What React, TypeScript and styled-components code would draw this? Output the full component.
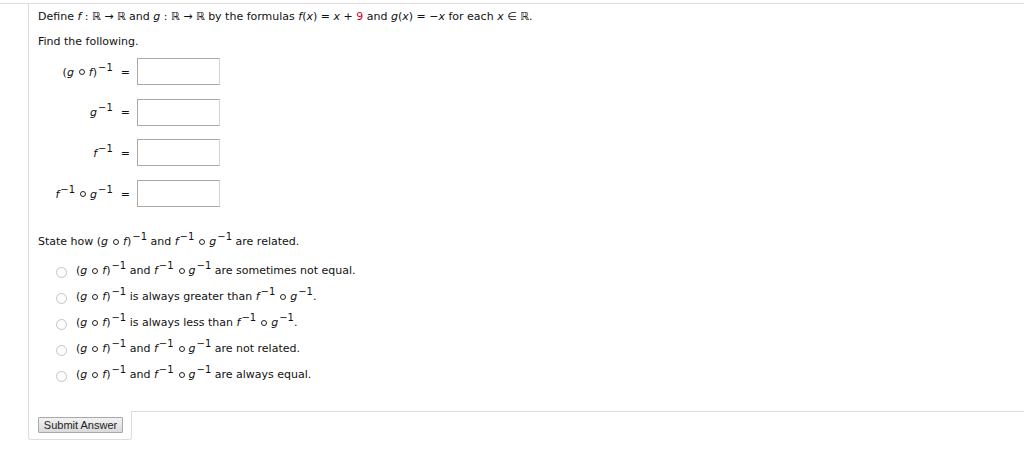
import React from "react";
import styled, { createGlobalStyle } from "styled-components";

const GlobalStyle = createGlobalStyle`
  html, body { margin: 0; padding: 0; background: #fff; }
  body {
    font-family: "DejaVu Sans", Verdana, sans-serif;
    font-size: 11px;
    color: #111;
    padding-top: 3px;
  }
`;

const Page = styled.div`
  border-top: 1px solid #dcdcdc;
`;

const Panel = styled.div`
  margin-left: 28px;
  border-left: 1px solid #dcdcdc;
  padding: 6px 0 29px 9px;
`;

const Para = styled.div<{ $mt?: number }>`
  line-height: 14px;
  margin-top: ${(p) => p.$mt ?? 0}px;
  white-space: nowrap;
`;

const V = styled.i`
  font-style: italic;
`;

const Red = styled.span`
  color: #d0021b;
`;

const Sup = styled.sup`
  font-size: 10px;
  line-height: 0;
  vertical-align: 5px;
  font-style: normal;
  margin-left: 1px;
`;

const Comp = styled.span`
  display: inline-block;
  box-sizing: border-box;
  width: 6px;
  height: 6px;
  border: 1.6px solid #222;
  border-radius: 50%;
  margin: 0 4px 1px 5px;
  vertical-align: middle;
`;

const Grid = styled.div`
  margin-top: 9px;
  display: grid;
  grid-template-columns: 92px 83px;
  column-gap: 7px;
  row-gap: 13.7px;
  align-items: center;
`;

const Label = styled.div`
  text-align: right;
  white-space: nowrap;
  line-height: 14px;
  padding-top: 2px;
`;

const Eq = styled.span`
  margin-left: 8px;
`;

const AnswerBox = styled.input`
  box-sizing: border-box;
  width: 83px;
  height: 27px;
  margin: 0;
  border: 1px solid #a9a9a9;
  border-right-color: #d4d4d4;
  background: #fff;
  padding: 0 4px;
  font: inherit;
`;

const Options = styled.div`
  margin-top: 15px;
  margin-left: 18px;
  display: flex;
  flex-direction: column;
  gap: 12px;
`;

const Option = styled.label`
  display: flex;
  align-items: center;
  gap: 9px;
  line-height: 14px;
  white-space: nowrap;
`;

const Radio = styled.span`
  box-sizing: border-box;
  width: 11px;
  height: 11px;
  border-radius: 50%;
  border: 1px solid #c4c4c4;
  background: #fdfdfd;
  flex: none;
  margin-top: 2px;
`;

const Footer = styled.div`
  display: flex;
  align-items: flex-start;
`;

const ButtonTab = styled.div`
  margin-left: 28px;
  width: 104px;
  border: 1px solid #dcdcdc;
  border-top: none;
  border-radius: 0 0 3px 3px;
  padding: 6px 0 6px 9px;
  box-sizing: border-box;
`;

const Filler = styled.div`
  flex: 1;
  border-top: 1px solid #dcdcdc;
`;

const SubmitButton = styled.button`
  display: block;
  box-sizing: border-box;
  width: 85px;
  height: 16px;
  padding: 0;
  margin: 0;
  border: 1px solid #a8a8a8;
  border-radius: 1px;
  background: linear-gradient(#f2f2f2, #dadada);
  font-family: "Liberation Sans", Arial, sans-serif;
  font-size: 11px;
  color: #222;
  line-height: 14px;
`;

const GoF = () => (
  <>
    (<V>g</V>
    <Comp />
    <V>f</V>)<Sup>−1</Sup>
  </>
);

const FinvGinv = () => (
  <>
    <V>f</V>
    <Sup>−1</Sup>
    <Comp />
    <V>g</V>
    <Sup>−1</Sup>
  </>
);

const options: React.ReactNode[] = [
  <>
    <GoF /> and <FinvGinv /> are sometimes not equal.
  </>,
  <>
    <GoF /> is always greater than <FinvGinv />.
  </>,
  <>
    <GoF /> is always less than <FinvGinv />.
  </>,
  <>
    <GoF /> and <FinvGinv /> are not related.
  </>,
  <>
    <GoF /> and <FinvGinv /> are always equal.
  </>,
];

export default function App() {
  return (
    <Page>
      <GlobalStyle />
      <Panel>
        <Para>
          Define <V>f</V> : ℝ → ℝ and <V>g</V> : ℝ → ℝ by the formulas <V>f</V>(<V>x</V>) = <V>x</V> + <Red>9</Red> and{" "}
          <V>g</V>(<V>x</V>) = −<V>x</V> for each <V>x</V> ∈ ℝ.
        </Para>
        <Para $mt={11}>Find the following.</Para>
        <Grid>
          <Label>
            <GoF />
            <Eq>=</Eq>
          </Label>
          <AnswerBox type="text" />
          <Label>
            <V>g</V>
            <Sup>−1</Sup>
            <Eq>=</Eq>
          </Label>
          <AnswerBox type="text" />
          <Label>
            <V>f</V>
            <Sup>−1</Sup>
            <Eq>=</Eq>
          </Label>
          <AnswerBox type="text" />
          <Label>
            <FinvGinv />
            <Eq>=</Eq>
          </Label>
          <AnswerBox type="text" />
        </Grid>
        <Para $mt={28}>
          State how <GoF /> and <FinvGinv /> are related.
        </Para>
        <Options>
          {options.map((o, i) => (
            <Option key={i}>
              <Radio />
              <span>{o}</span>
            </Option>
          ))}
        </Options>
      </Panel>
      <Footer>
        <ButtonTab>
          <SubmitButton type="button">Submit Answer</SubmitButton>
        </ButtonTab>
        <Filler />
      </Footer>
    </Page>
  );
}
